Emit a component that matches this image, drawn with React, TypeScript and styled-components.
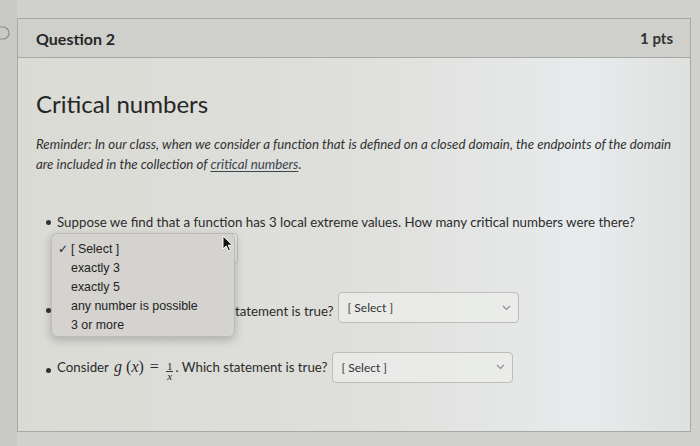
import React from 'react';
import styled, { createGlobalStyle } from 'styled-components';

const GlobalStyle = createGlobalStyle`
    html,
    body {
        margin: 0;
        padding: 0;
        background: #d0d0cc;
        font-family: Lato, 'Open Sans', sans-serif;
        color: #2b2b2b;
    }
`;

const Page = styled.div`
    display: grid;
    grid-template-columns: 17px 674px;
    height: 446px;
    overflow: hidden;
    padding-top: 18px;
    box-sizing: border-box;
`;

const SideStrip = styled.div`
    background: #c9c9c5;
    margin-top: -18px;
    padding-top: 26px;
    svg {
        display: block;
    }
`;

const Card = styled.section`
    height: 414px;
    border: 1px solid #a8a8a4;
    box-sizing: border-box;
    display: flex;
    flex-direction: column;
    background: linear-gradient(
        90deg,
        #dbdbd6 0%,
        #dededa 45%,
        #e4e6e5 70%,
        #e8ebec 85%,
        #dfe1df 100%
    );
`;

const Header = styled.header`
    height: 39px;
    box-sizing: border-box;
    display: flex;
    align-items: center;
    justify-content: space-between;
    padding: 0 17px 0 18px;
    background: #cfcfcb;
    border-bottom: 1px solid #a8a8a4;
`;

const QuestionName = styled.span`
    font-size: 16px;
    font-weight: 700;
    color: #262626;
`;

const Points = styled.span`
    font-size: 15px;
    font-weight: 700;
    color: #333;
`;

const Body = styled.div`
    padding: 31px 18px 0 18px;
    flex: 1;
`;

const Title = styled.h2`
    margin: 0;
    font-size: 24px;
    line-height: 29px;
    font-weight: 400;
    color: #262626;
`;

const Reminder = styled.p`
    margin: 16px 0 0;
    font-size: 13.3px;
    line-height: 20px;
    font-style: italic;
    color: #333;
`;

const TermLink = styled.span`
    text-decoration: underline;
    text-underline-offset: 2px;
    color: #3a4550;
`;

const List = styled.ul`
    list-style: none;
    margin: 38px 0 0;
    padding: 0 0 0 10px;
    display: flex;
    flex-direction: column;
    gap: 28px;
`;

const Item = styled.li<{ $top?: boolean }>`
    position: relative;
    display: flex;
    align-items: ${(p) => (p.$top ? 'flex-start' : 'center')};
    z-index: ${(p) => (p.$top ? 2 : 1)};
`;

const Bullet = styled.span<{ $top?: boolean }>`
    flex: none;
    width: 5px;
    height: 5px;
    border-radius: 50%;
    background: #333;
    margin-right: 6px;
    margin-top: ${(p) => (p.$top ? '8px' : '6px')};
`;

const ItemBody = styled.div`
    display: flex;
    flex-wrap: wrap;
    align-items: center;
    row-gap: 1px;
    column-gap: 4px;
`;

const ItemText = styled.span<{ $drop?: boolean }>`
    font-size: 13.3px;
    line-height: 20px;
    color: #2b2b2b;
    margin-top: ${(p) => (p.$drop ? '6px' : '0')};
`;

const Select = styled.div`
    width: 181px;
    height: 31px;
    box-sizing: border-box;
    border: 1px solid #bdbdb9;
    border-radius: 4px;
    background: rgba(236, 237, 235, 0.75);
    display: flex;
    align-items: center;
    justify-content: space-between;
    padding: 0 7px 0 9px;
    font-size: 12px;
    color: #333;
    svg {
        flex: none;
    }
`;

const MathExpr = styled.span`
    font-family: 'Liberation Serif', 'DejaVu Serif', serif;
    font-size: 16px;
    display: inline-flex;
    align-items: baseline;
    margin: 0 1px 0 2px;
`;

const Var = styled.i<{ $gap?: number }>`
    font-style: italic;
    margin-right: ${(p) => p.$gap ?? 0}px;
`;

const Op = styled.span`
    margin: 0 6px;
`;

const Frac = styled.span`
    display: inline-flex;
    flex-direction: column;
    align-items: center;
    font-size: 11px;
    line-height: 10px;
    transform: translateY(-2px);
    padding: 0 1px;
`;

const FracTop = styled.span`
    border-bottom: 1px solid #333;
    padding: 0 1px;
    line-height: 10px;
`;

const FracBottom = styled.i`
    line-height: 9px;
`;

const Popup = styled.div`
    position: absolute;
    z-index: 5;
    left: 5px;
    top: 21px;
    width: 184px;
    height: 104px;
    box-sizing: border-box;
    padding: 6px 0 0;
    border-radius: 6px;
    border: 1px solid #bdbbb7;
    background: #d5d3cf;
    box-shadow: 0 3px 10px rgba(0, 0, 0, 0.22);
    font-family: 'Liberation Sans', Arial, sans-serif;
    font-size: 12.4px;
    color: #222;
`;

const Option = styled.div`
    position: relative;
    height: 19px;
    line-height: 19px;
    padding-left: 19px;
`;

const Check = styled.span`
    position: absolute;
    left: 6px;
    top: 0;
    font-family: 'DejaVu Sans', sans-serif;
    font-size: 12px;
`;

const Cursor = styled.svg`
    position: absolute;
    left: 170px;
    top: 1px;
`;

const Chevron = () => (
    <svg width="9" height="6" viewBox="0 0 9 6">
        <path d="M1 1l3.5 3.5L8 1" fill="none" stroke="#8a8f95" strokeWidth="1.2" />
    </svg>
);

const options = ['[ Select ]', 'exactly 3', 'exactly 5', 'any number is possible', '3 or more'];

export default function App() {
    return (
        <>
            <GlobalStyle />
            <Page>
                <SideStrip>
                    <svg width="17" height="14" viewBox="0 0 17 14">
                        <path d="M0 1h3a6 6 0 0 1 0 12H0" fill="none" stroke="#8d8d89" strokeWidth="1.2" />
                    </svg>
                </SideStrip>
                <Card>
                    <Header>
                        <QuestionName>Question 2</QuestionName>
                        <Points>1 pts</Points>
                    </Header>
                    <Body>
                        <Title>Critical numbers</Title>
                        <Reminder>
                            Reminder: In our class, when we consider a function that is defined on a closed domain,
                            the endpoints of the domain are included in the collection of{' '}
                            <TermLink>critical numbers</TermLink>.
                        </Reminder>
                        <List>
                            <Item $top>
                                <Bullet $top />
                                <ItemBody>
                                    <ItemText>
                                        Suppose we find that a function has 3 local extreme values. How many critical
                                        numbers were there?
                                    </ItemText>
                                    <Select>
                                        <span>[ Select ]</span>
                                        <Chevron />
                                    </Select>
                                </ItemBody>
                                <Popup>
                                    {options.map((o, i) => (
                                        <Option key={o}>
                                            {i === 0 && <Check>✓</Check>}
                                            {o}
                                        </Option>
                                    ))}
                                    <Cursor width="12" height="17" viewBox="0 0 12 17">
                                        <path
                                            d="M1 1v13l3.2-3 2.3 5 2-1-2.3-4.8H10.5z"
                                            fill="#111"
                                            stroke="#fff"
                                            strokeWidth="1"
                                        />
                                    </Cursor>
                                </Popup>
                            </Item>
                            <Item>
                                <Bullet />
                                <ItemBody>
                                    <ItemText $drop>Consider f (x) = x³ + 1. Which statement is true?</ItemText>
                                    <Select>
                                        <span>[ Select ]</span>
                                        <Chevron />
                                    </Select>
                                </ItemBody>
                            </Item>
                            <Item>
                                <Bullet />
                                <ItemBody>
                                    <ItemText $drop>
                                        Consider{' '}
                                        <MathExpr>
                                            <Var $gap={4}>g</Var>
                                            <span>(</span>
                                            <Var>x</Var>
                                            <span>)</span>
                                            <Op>=</Op>
                                            <Frac>
                                                <FracTop>1</FracTop>
                                                <FracBottom>x</FracBottom>
                                            </Frac>
                                        </MathExpr>
                                        . Which statement is true?
                                    </ItemText>
                                    <Select>
                                        <span>[ Select ]</span>
                                        <Chevron />
                                    </Select>
                                </ItemBody>
                            </Item>
                        </List>
                    </Body>
                </Card>
            </Page>
        </>
    );
}
